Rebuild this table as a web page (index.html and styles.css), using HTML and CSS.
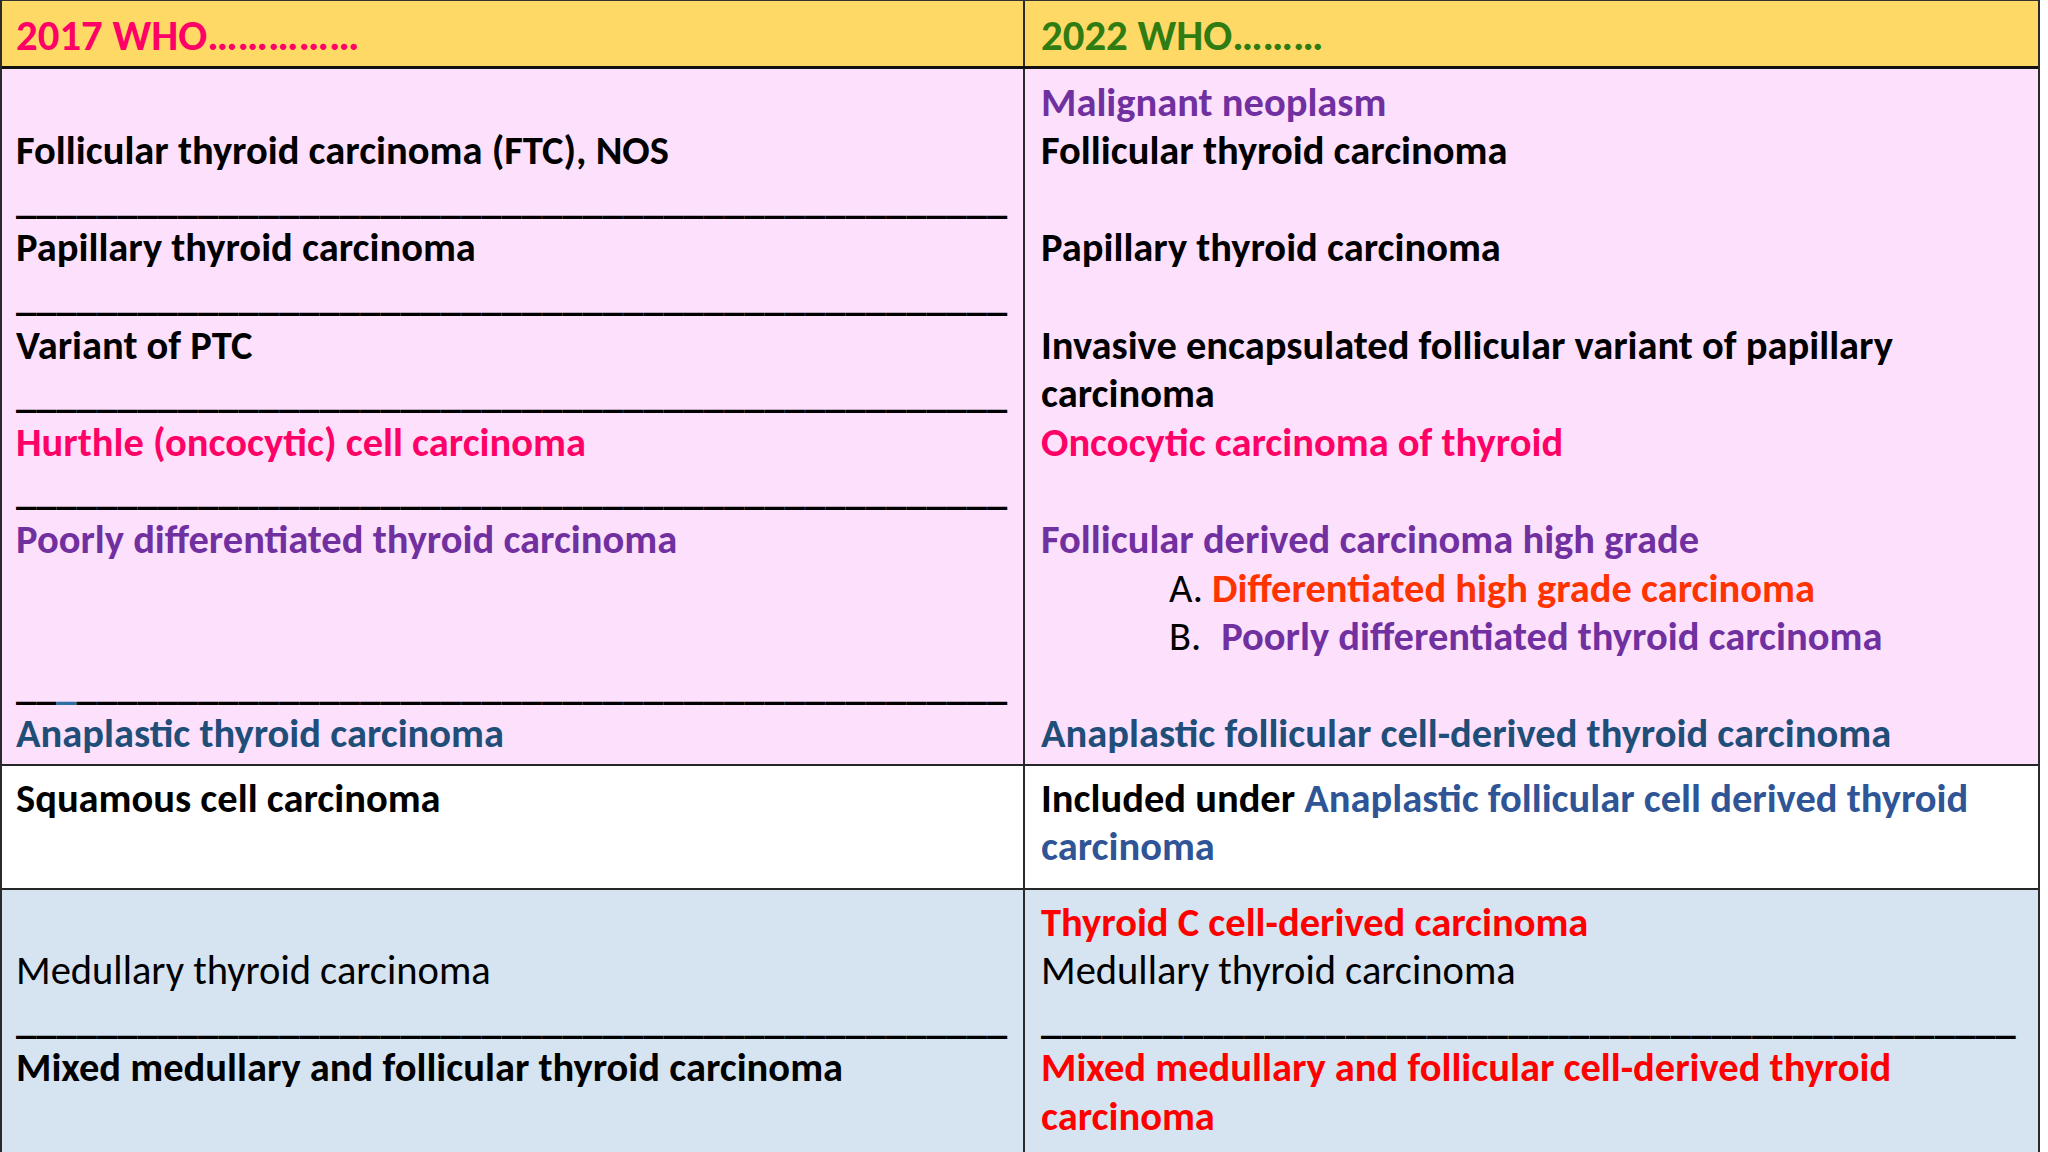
FILE: index.html
```html
<!DOCTYPE html>
<html lang="en">
<head>
<meta charset="utf-8">
<title>Thyroid carcinoma – WHO 2017 vs 2022</title>
<link rel="stylesheet" href="styles.css">
</head>
<body>
<div class="slide">
  <div class="row head">
    <div class="cell left"><p class="c-pink">2017 WHO……………</p></div>
    <div class="cell right"><p class="c-green">2022 WHO………</p></div>
  </div>

  <div class="row pink">
    <div class="cell left">
      <p class="blank"></p>
      <p>Follicular thyroid carcinoma (FTC), NOS</p>
      <p class="rule">_________________________________________________</p>
      <p>Papillary thyroid carcinoma</p>
      <p class="rule">_________________________________________________</p>
      <p>Variant of PTC</p>
      <p class="rule">_________________________________________________</p>
      <p class="c-pink">Hurthle (oncocytic) cell carcinoma</p>
      <p class="rule">_________________________________________________</p>
      <p class="c-purple">Poorly differentiated thyroid carcinoma</p>
      <p class="blank"></p>
      <p class="blank"></p>
      <p class="rule">__<span class="u-blue">_</span>______________________________________________</p>
      <p class="c-navy">Anaplastic thyroid carcinoma</p>
    </div>
    <div class="cell right">
      <p class="c-purple">Malignant neoplasm</p>
      <p>Follicular thyroid carcinoma</p>
      <p class="blank"></p>
      <p>Papillary thyroid carcinoma</p>
      <p class="blank"></p>
      <p>Invasive encapsulated follicular variant of papillary carcinoma</p>
      <p class="c-pink">Oncocytic carcinoma of thyroid</p>
      <p class="blank"></p>
      <p class="c-purple">Follicular derived carcinoma high grade</p>
      <p class="item"><span class="mk">A.</span><span class="c-orange">Differentiated high grade carcinoma</span></p>
      <p class="item"><span class="mk">B.</span>&nbsp;<span class="c-purple">Poorly differentiated thyroid carcinoma</span></p>
      <p class="blank"></p>
      <p class="c-navy">Anaplastic follicular cell-derived thyroid carcinoma</p>
    </div>
  </div>

  <div class="row white">
    <div class="cell left">
      <p>Squamous cell carcinoma</p>
    </div>
    <div class="cell right">
      <p>Included under <span class="c-blue">Anaplastic follicular cell derived thyroid carcinoma</span></p>
    </div>
  </div>

  <div class="row blue">
    <div class="cell left">
      <p class="blank"></p>
      <p class="regular">Medullary thyroid carcinoma</p>
      <p class="rule">_________________________________________________</p>
      <p>Mixed medullary and follicular thyroid carcinoma</p>
      <p class="blank"></p>
    </div>
    <div class="cell right">
      <p class="c-red">Thyroid C cell-derived carcinoma</p>
      <p class="regular">Medullary thyroid carcinoma</p>
      <p class="rule rule-r">________________________________________________</p>
      <p class="c-red">Mixed medullary and follicular cell-derived thyroid carcinoma</p>
    </div>
  </div>
</div>
</body>
</html>
```
FILE: styles.css
```css
html, body {
  margin: 0;
  padding: 0;
  overflow: hidden;
  background: #ffffff;
}

.slide {
  width: 2040px;
  box-sizing: border-box;
  border-top: 1px solid #333333;
  border-left: 2px solid #2a2a2a;
  border-right: 2px solid #2a2a2a;
  font-family: Carlito, Calibri, "Liberation Sans", sans-serif;
  font-size: 40.5px;
  font-weight: 700;
  line-height: 48.6px;
  color: #000000;
}

.row {
  display: grid;
  grid-template-columns: 1023px 1fr;
  border-bottom: 2px solid #262626;
}

.cell p {
  margin: 0;
}

.cell.left {
  border-right: 2px solid #2a2a2a;
  padding-left: 14px;
  padding-right: 10px;
}

.cell.right {
  padding-left: 16px;
  padding-right: 14px;
}

/* Header row */
.head {
  background: #ffd966;
  border-bottom: 3px solid #111111;
}
.head .cell {
  padding-top: 9.7px;
  padding-bottom: 6.7px;
  font-size: 42.8px;
}

/* Pink block */
.pink {
  background: #fce0fc;
}
.pink .cell {
  padding-top: 8.7px;
  padding-bottom: 6.4px;
}

/* White block */
.white {
  background: #ffffff;
}
.white .cell {
  padding-top: 7.2px;
  padding-bottom: 17.6px;
}

/* Blue block */
.blue {
  background: #d6e3f0;
  border-bottom: none;
}
.blue .cell {
  padding-top: 7.2px;
  padding-bottom: 40px;
}

.blank {
  height: 48.6px;
}

.rule {
  white-space: nowrap;
  color: #000000;
  letter-spacing: 0.06px;
}
.rule-r { letter-spacing: 0.14px; }
.u-blue { color: #2e6da4; }

.item {
  padding-left: 128px;
}
.mk {
  display: inline-block;
  width: 43px;
  font-weight: 400;
  color: #000000;
}

.regular { font-weight: 400; }

.c-pink   { color: #ff0066; }
.c-green  { color: #2f7d12; }
.c-purple { color: #7030a0; }
.c-orange { color: #ff3300; }
.c-navy   { color: #1f4e79; }
.c-blue   { color: #2f5597; }
.c-red    { color: #ff0000; }
```
